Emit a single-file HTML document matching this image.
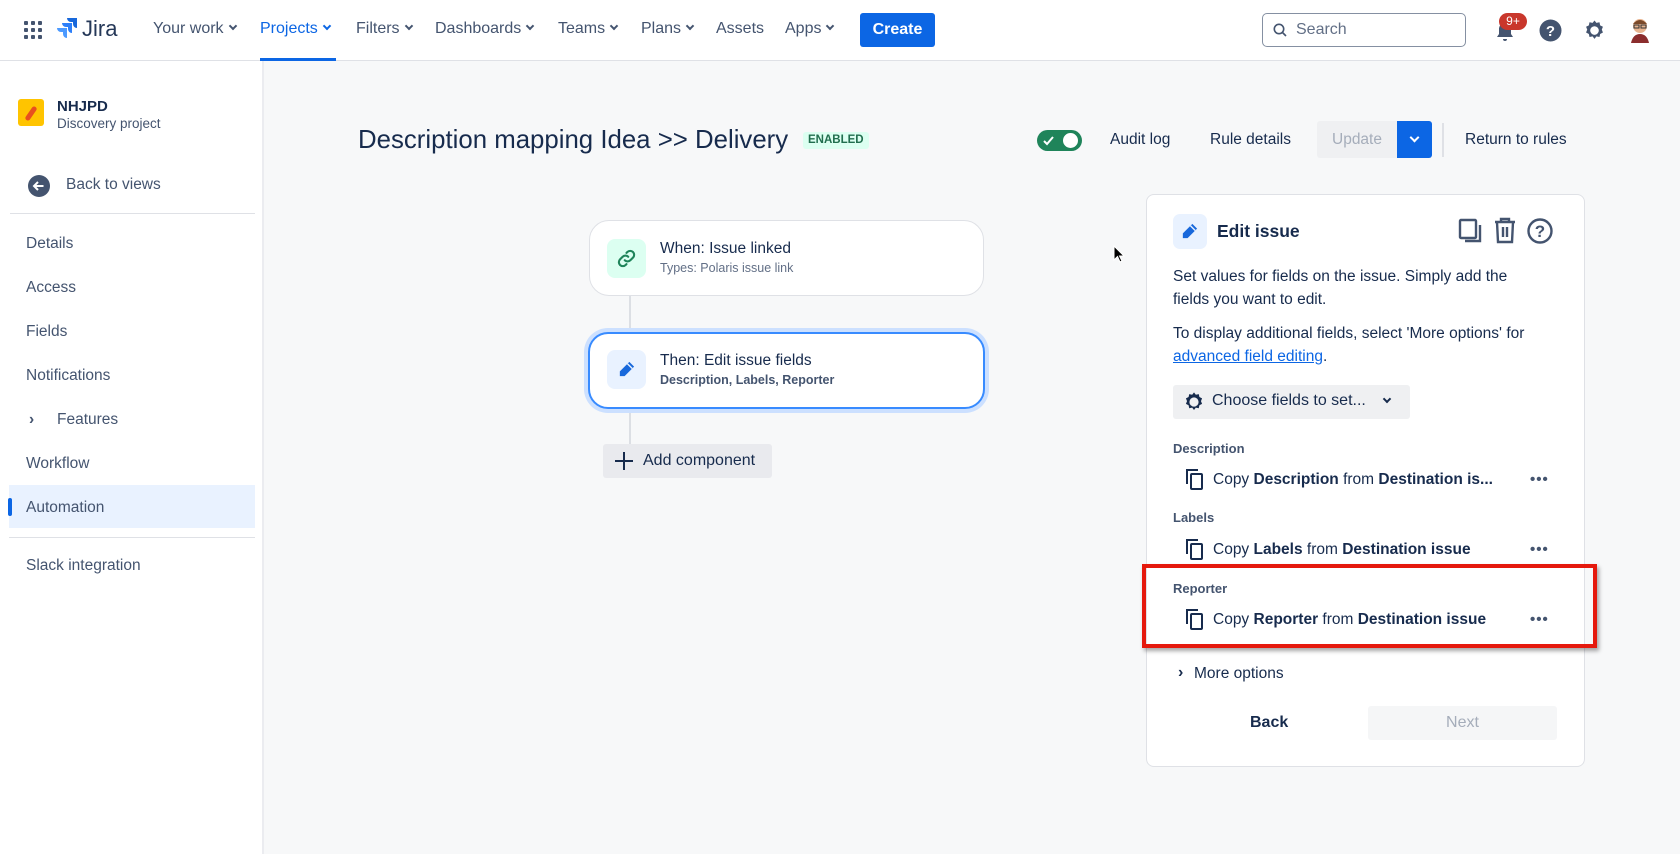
<!DOCTYPE html>
<html><head><meta charset="utf-8"><style>
*{box-sizing:border-box;margin:0;padding:0}
body{width:1680px;height:854px;overflow:hidden;background:#f7f8f9;font-family:"Liberation Sans",Arial,sans-serif;color:#172b4d;position:relative}
.a{position:absolute;white-space:nowrap}
.hdr{position:absolute;left:0;top:0;width:1680px;height:61px;background:#fff;border-bottom:1px solid #dfe1e6}
.nav{position:absolute;top:20px;font-size:16px;color:#44546f}
.chev{display:inline-block;width:6px;height:6px;border-right:2px solid currentColor;border-bottom:2px solid currentColor;transform:rotate(45deg);margin-left:6px;position:relative;top:-4px}
.side{position:absolute;left:0;top:61px;width:264px;height:793px;background:#fff;border-right:2px solid #ebecf0}
.si{position:absolute;left:26px;font-size:15.5px;color:#44546f}
.card{position:absolute;background:#fff;border:1px solid #dfe1e6;border-radius:20px}
.ib{position:absolute;width:39px;height:39px;border-radius:8px}
.pt{font-size:15.5px;color:#172b4d}
.lbl{position:absolute;left:1173px;font-size:13px;font-weight:bold;color:#44546f}
.row{position:absolute;left:1213px;font-size:15.5px;color:#172b4d}
.dots{position:absolute;left:1530px;font-size:15px;letter-spacing:1px;font-weight:bold;color:#44546f}
</style></head><body>
<div class="hdr">
 <svg class="a" style="left:24px;top:21px" width="18" height="18" viewBox="0 0 18 18" fill="#44546f"><rect x="0" y="0" width="4" height="4" rx="1"/><rect x="7" y="0" width="4" height="4" rx="1"/><rect x="14" y="0" width="4" height="4" rx="1"/><rect x="0" y="7" width="4" height="4" rx="1"/><rect x="7" y="7" width="4" height="4" rx="1"/><rect x="14" y="7" width="4" height="4" rx="1"/><rect x="0" y="14" width="4" height="4" rx="1"/><rect x="7" y="14" width="4" height="4" rx="1"/><rect x="14" y="14" width="4" height="4" rx="1"/></svg>
 <svg class="a" style="left:56px;top:17px" width="22" height="24" viewBox="0 0 22 24"><path d="M21 1H11a4 4 0 0 0 4 4h2v2a4 4 0 0 0 4 4z" fill="#1868db"/><path d="M16 6H6a4 4 0 0 0 4 4h2v2a4 4 0 0 0 4 4z" fill="#2d7ff9"/><path d="M11 11H1a4 4 0 0 0 4 4h2v2a4 4 0 0 0 4 4z" fill="#4c9aff"/></svg>
 <div class="a" style="left:82px;top:16px;font-size:22px;color:#253858">Jira</div>
 <div class="nav" style="left:153px">Your work<span class="chev"></span></div>
 <div class="nav" style="left:260px;color:#0c66e4">Projects<span class="chev"></span></div>
 <div class="a" style="left:260px;top:58px;width:76px;height:3px;background:#0c66e4"></div>
 <div class="nav" style="left:356px">Filters<span class="chev"></span></div>
 <div class="nav" style="left:435px">Dashboards<span class="chev"></span></div>
 <div class="nav" style="left:558px">Teams<span class="chev"></span></div>
 <div class="nav" style="left:641px">Plans<span class="chev"></span></div>
 <div class="nav" style="left:716px">Assets</div>
 <div class="nav" style="left:785px">Apps<span class="chev"></span></div>
 <div class="a" style="left:860px;top:13px;width:75px;height:34px;background:#0c66e4;border-radius:3px;color:#fff;font-size:16px;font-weight:bold;text-align:center;line-height:34px">Create</div>
 <div class="a" style="left:1262px;top:13px;width:204px;height:34px;border:1px solid #8590a2;border-radius:5px"></div>
 <svg class="a" style="left:1273px;top:23px" width="14" height="14" viewBox="0 0 14 14" fill="none" stroke="#44546f" stroke-width="1.6"><circle cx="6" cy="6" r="4.7"/><path d="M9.5 9.5L13 13"/></svg>
 <div class="a" style="left:1296px;top:21px;font-size:16px;color:#626f86">Search</div>
 <svg class="a" style="left:1494px;top:20px" width="22" height="22" viewBox="0 0 22 22"><path d="M11 3a6 6 0 0 0-6 6v5l-2 3h16l-2-3V9a6 6 0 0 0-6-6zM9 19a2 2 0 0 0 4 0z" fill="#44546f"/></svg>
 <div class="a" style="left:1499px;top:13px;width:28px;height:17px;background:#c9372c;border-radius:9px;color:#fff;font-size:12px;text-align:center;line-height:17px">9+</div>
 <svg class="a" style="left:1539px;top:19px" width="23" height="23" viewBox="0 0 23 23"><circle cx="11.5" cy="11.5" r="11" fill="#44546f"/><text x="11.5" y="17" font-size="15" font-weight="bold" fill="#fff" text-anchor="middle" font-family="Liberation Sans">?</text></svg>
 <svg class="a" style="left:1583px;top:19px" width="23" height="23" viewBox="0 0 24 24"><path d="M12 1.5l2 2.6 3.2-.7.7 3.2 2.9 1.5-1.2 3 1.2 3-2.9 1.5-.7 3.2-3.2-.7-2 2.6-2-2.6-3.2.7-.7-3.2-2.9-1.5 1.2-3-1.2-3 2.9-1.5.7-3.2 3.2.7z" fill="#44546f"/><circle cx="12" cy="12" r="4.5" fill="#fff"/></svg>
 <svg class="a" style="left:1626px;top:16px" width="28" height="28" viewBox="0 0 28 28"><circle cx="14" cy="10" r="7" fill="#e8b48f"/><path d="M7 8q7-8 14 0" fill="#7a4a2a"/><rect x="8" y="9" width="5" height="3" fill="none" stroke="#333"/><rect x="15" y="9" width="5" height="3" fill="none" stroke="#333"/><path d="M5 27q2-9 9-9t9 9z" fill="#8b2d2d"/></svg>
</div>

<div class="side">
 <div class="a" style="left:18px;top:38px;width:26px;height:27px;background:#ffc400;border-radius:3px"></div>
 <div class="a" style="left:23px;top:50px;width:16px;height:5px;background:#e8501e;border-radius:3px;transform:rotate(-55deg)"></div>
 <div class="a" style="left:57px;top:37px;font-size:15px;font-weight:bold;color:#172b4d">NHJPD</div>
 <div class="a" style="left:57px;top:55px;font-size:13.5px;color:#44546f">Discovery project</div>
 <svg class="a" style="left:28px;top:114px" width="22" height="22" viewBox="0 0 22 22"><circle cx="11" cy="11" r="11" fill="#44546f"/><path d="M15.5 11h-9M10 7l-4 4 4 4" stroke="#fff" stroke-width="2" fill="none"/></svg>
 <div class="si" style="left:66px;top:115px">Back to views</div>
 <div class="a" style="left:10px;top:152px;width:245px;height:1px;background:#dfe1e6"></div>
 <div class="si" style="top:174px">Details</div>
 <div class="si" style="top:218px">Access</div>
 <div class="si" style="top:262px">Fields</div>
 <div class="si" style="top:306px">Notifications</div>
 <div class="si" style="left:29px;top:350px;font-weight:bold">›</div>
 <div class="si" style="left:57px;top:350px">Features</div>
 <div class="si" style="top:394px">Workflow</div>
 <div class="a" style="left:9px;top:424px;width:246px;height:43px;background:#e9f2ff"></div>
 <div class="a" style="left:8px;top:437px;width:4px;height:18px;background:#0c66e4;border-radius:2px"></div>
 <div class="si" style="top:438px;color:#44546f">Automation</div>
 <div class="a" style="left:9px;top:476px;width:246px;height:1px;background:#dfe1e6"></div>
 <div class="si" style="top:496px">Slack integration</div>
</div>

<div class="a" style="left:358px;top:126px;font-size:25.8px;color:#172b4d">Description mapping Idea &gt;&gt; Delivery</div>
<div class="a" style="left:803px;top:132px;height:17px;padding:0 5px;background:#dcfff1;color:#216e4e;font-size:11.5px;font-weight:bold;line-height:17px;border-radius:3px">ENABLED</div>

<div class="a" style="left:1037px;top:130px;width:45px;height:21px;background:#1f845a;border-radius:11px"></div>
<div class="a" style="left:1063px;top:133px;width:15px;height:15px;background:#fff;border-radius:50%"></div>
<svg class="a" style="left:1042px;top:134px" width="13" height="13" viewBox="0 0 13 13"><path d="M2 7l3 3 6-7" stroke="#fff" stroke-width="2" fill="none"/></svg>
<div class="a" style="left:1110px;top:131px;font-size:15.5px">Audit log</div>
<div class="a" style="left:1210px;top:131px;font-size:15.5px">Rule details</div>
<div class="a" style="left:1317px;top:121px;width:80px;height:37px;background:#eff0f2;border-radius:3px 0 0 3px;color:#a5adba;font-size:15.5px;text-align:center;line-height:37px">Update</div>
<div class="a" style="left:1397px;top:121px;width:35px;height:37px;background:#0c66e4;border-radius:0 3px 3px 0"></div>
<div class="a" style="left:1411px;top:134px;width:7px;height:7px;border-right:2px solid #fff;border-bottom:2px solid #fff;transform:rotate(45deg)"></div>
<div class="a" style="left:1442px;top:123px;width:2px;height:34px;background:#dfe1e6"></div>
<div class="a" style="left:1465px;top:131px;font-size:15.5px">Return to rules</div>

<div class="a" style="left:629px;top:296px;width:2px;height:36px;background:#dcdfe4"></div>
<div class="a" style="left:629px;top:409px;width:2px;height:36px;background:#dcdfe4"></div>
<div class="card" style="left:589px;top:220px;width:395px;height:76px"></div>
<div class="ib" style="left:607px;top:239px;background:#dcfff1"></div>
<svg class="a" style="left:616px;top:248px" width="21" height="21" viewBox="0 0 24 24" fill="none" stroke="#1f845a" stroke-width="2.4" stroke-linecap="round"><path d="M10 14a4.5 4.5 0 0 0 6.4 0l3-3a4.5 4.5 0 0 0-6.4-6.4l-1 1"/><path d="M14 10a4.5 4.5 0 0 0-6.4 0l-3 3a4.5 4.5 0 0 0 6.4 6.4l1-1"/></svg>
<div class="a pt" style="left:660px;top:240px">When: Issue linked</div>
<div class="a" style="left:660px;top:261px;font-size:12.5px;color:#626f86">Types: Polaris issue link</div>

<div class="card" style="left:588px;top:332px;width:397px;height:77px;border:2px solid #388bff;box-shadow:0 0 0 4px #cce0ff"></div>
<div class="ib" style="left:607px;top:350px;background:#e9f2ff"></div>
<svg class="a" style="left:617px;top:360px" width="19" height="19" viewBox="0 0 20 20"><path d="M13 2l5 5-10 10H3v-5z" fill="#1868db"/><path d="M11 4l5 5" stroke="#e9f2ff" stroke-width="1.5"/></svg>
<div class="a pt" style="left:660px;top:352px">Then: Edit issue fields</div>
<div class="a" style="left:660px;top:373px;font-size:12.5px;font-weight:bold;color:#44546f">Description, Labels, Reporter</div>
<div class="a" style="left:603px;top:444px;width:169px;height:34px;background:#e9eaee;border-radius:3px"></div>
<svg class="a" style="left:614px;top:451px" width="20" height="20" viewBox="0 0 20 20"><path d="M10 1v18M1 10h18" stroke="#172b4d" stroke-width="2"/></svg>
<div class="a" style="left:643px;top:452px;font-size:16px;color:#172b4d">Add component</div>

<svg class="a" style="left:1113px;top:245px" width="12" height="18" viewBox="0 0 12 18"><path d="M1 1v14l3.5-3.5 2.5 5.5 2-1-2.5-5H11z" fill="#000" stroke="#fff" stroke-width="1"/></svg>

<div class="a" style="left:1146px;top:194px;width:439px;height:573px;background:#fff;border:1px solid #dfe1e6;border-radius:8px"></div>
<div class="a" style="left:1173px;top:214px;width:34px;height:35px;background:#e9f2ff;border-radius:7px"></div>
<svg class="a" style="left:1180px;top:222px" width="19" height="19" viewBox="0 0 20 20"><path d="M13 2l5 5-10 10H3v-5z" fill="#1868db"/><path d="M11 4l5 5" stroke="#e9f2ff" stroke-width="1.5"/></svg>
<div class="a" style="left:1217px;top:221px;font-size:17.5px;font-weight:bold">Edit issue</div>
<svg class="a" style="left:1458px;top:218px" width="24" height="26" viewBox="0 0 24 26" fill="none" stroke="#44546f" stroke-width="2.4"><rect x="2" y="2" width="16" height="18" rx="1"/><path d="M22 7v16H7"/></svg>
<svg class="a" style="left:1494px;top:217px" width="22" height="27" viewBox="0 0 22 27" fill="none" stroke="#44546f" stroke-width="2.4"><path d="M1 5h20M7 5V2h8v3M3 5l1 20h14l1-20M9 10v10M13 10v10"/></svg>
<svg class="a" style="left:1527px;top:218px" width="26" height="26" viewBox="0 0 26 26"><circle cx="13" cy="13" r="11.5" fill="none" stroke="#44546f" stroke-width="2.4"/><text x="13" y="19" font-size="17" font-weight="bold" fill="#44546f" text-anchor="middle" font-family="Liberation Sans">?</text></svg>
<div class="a" style="left:1173px;top:265px;font-size:15.5px;line-height:23px;white-space:normal;width:350px">Set values for fields on the issue. Simply add the fields you want to edit.</div>
<div class="a" style="left:1173px;top:322px;font-size:15.5px;line-height:23px;white-space:normal;width:390px">To display additional fields, select 'More options' for <span style="color:#0c66e4;text-decoration:underline">advanced field editing</span>.</div>
<div class="a" style="left:1173px;top:385px;width:237px;height:34px;background:#eff0f2;border-radius:3px"></div>
<svg class="a" style="left:1183px;top:391px" width="22" height="22" viewBox="0 0 24 24"><path d="M12 1.5l2 2.6 3.2-.7.7 3.2 2.9 1.5-1.2 3 1.2 3-2.9 1.5-.7 3.2-3.2-.7-2 2.6-2-2.6-3.2.7-.7-3.2-2.9-1.5 1.2-3-1.2-3 2.9-1.5.7-3.2 3.2.7z" fill="#172b4d"/><circle cx="12" cy="12" r="5" fill="#eff0f2"/></svg>
<div class="a" style="left:1212px;top:392px;font-size:16px">Choose fields to set...</div>
<div class="a" style="left:1384px;top:396px;width:6px;height:6px;border-right:2px solid #172b4d;border-bottom:2px solid #172b4d;transform:rotate(45deg)"></div>

<div class="lbl" style="top:441px">Description</div>
<svg class="a" style="left:1186px;top:469px" width="18" height="21" viewBox="0 0 18 21" fill="none" stroke="#172b4d" stroke-width="2"><path d="M1 15V1h11"/><rect x="5" y="5" width="11" height="15" rx="1"/></svg>
<div class="row" style="top:471px">Copy <b>Description</b> from <b>Destination is...</b></div>
<div class="dots" style="top:471px">•••</div>
<div class="lbl" style="top:510px">Labels</div>
<svg class="a" style="left:1186px;top:539px" width="18" height="21" viewBox="0 0 18 21" fill="none" stroke="#172b4d" stroke-width="2"><path d="M1 15V1h11"/><rect x="5" y="5" width="11" height="15" rx="1"/></svg>
<div class="row" style="top:541px">Copy <b>Labels</b> from <b>Destination issue</b></div>
<div class="dots" style="top:541px">•••</div>
<div class="lbl" style="top:581px">Reporter</div>
<svg class="a" style="left:1186px;top:609px" width="18" height="21" viewBox="0 0 18 21" fill="none" stroke="#172b4d" stroke-width="2"><path d="M1 15V1h11"/><rect x="5" y="5" width="11" height="15" rx="1"/></svg>
<div class="row" style="top:611px">Copy <b>Reporter</b> from <b>Destination issue</b></div>
<div class="dots" style="top:611px">•••</div>
<div class="a" style="left:1142px;top:564px;width:455px;height:84px;border:4px solid #e5190d;box-shadow:2px 3px 4px rgba(0,0,0,.35)"></div>

<div class="a" style="left:1178px;top:664px;font-size:16px;font-weight:bold">›</div>
<div class="a" style="left:1194px;top:665px;font-size:15.5px">More options</div>
<div class="a" style="left:1250px;top:714px;font-size:16px;font-weight:bold">Back</div>
<div class="a" style="left:1368px;top:706px;width:189px;height:34px;background:#f5f6f7;border-radius:3px;color:#a5adba;font-size:16px;text-align:center;line-height:34px">Next</div>
</body></html>
